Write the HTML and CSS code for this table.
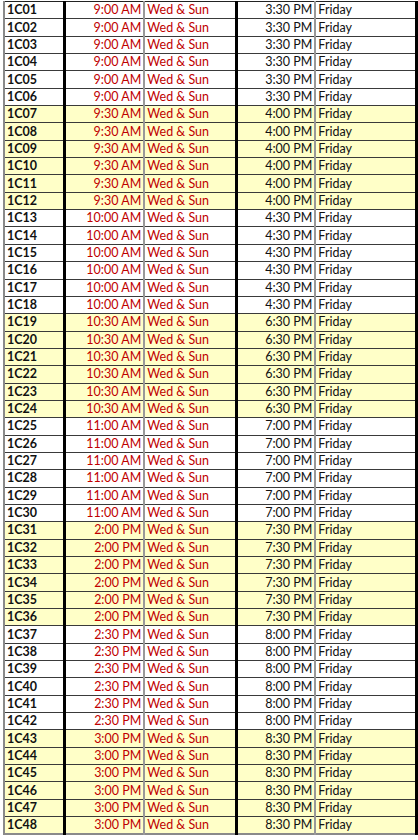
FILE: index.html
```html
<!DOCTYPE html>
<html>
<head>
<meta charset="utf-8">
<link rel="stylesheet" href="styles.css">
</head>
<body>
<table class="sched">
<tbody id="rows"></tbody>
</table>
<script>
var am=["9:00 AM","9:30 AM","10:00 AM","10:30 AM","11:00 AM","2:00 PM","2:30 PM","3:00 PM"];
var pm=["3:30 PM","4:00 PM","4:30 PM","6:30 PM","7:00 PM","7:30 PM","8:00 PM","8:30 PM"];
var tb=document.getElementById("rows");
for(var i=0;i<48;i++){
  var g=Math.floor(i/6);
  var n=i+1; var id="1C"+(n<10?"0"+n:n);
  var tr=document.createElement("tr");
  tr.className=(g%2)?"hl":"";
  tr.innerHTML='<td class="c1">'+id+'</td><td class="c2">'+am[g]+'</td><td class="c3">Wed &amp; Sun</td><td class="c4">'+pm[g]+'</td><td class="c5">Friday</td>';
  tb.appendChild(tr);
}
</script>
</body>
</html>
```
FILE: styles.css
```css
html, body { margin: 0; padding: 0; background: #fff; }
.sched {
  margin: 1px 0 0 3px;
  border-collapse: collapse;
  table-layout: fixed;
  font-family: Lato, "Open Sans", sans-serif;
  font-size: 12.5px;
  color: #111;
  border-left: 2px solid #8a8a8a;
  border-bottom: 2px solid #8a8a8a;
  border-top: 1px solid #222;
}
.sched tr { height: 17.35px; }
.sched td {
  padding: 0 2px;
  line-height: 14px;
  border-bottom: 1px solid #3a3a3a;
  white-space: nowrap;
  overflow: hidden;
}
.sched tr.hl td { background: #ffffc8; }
.c1 { width: 55px; font-weight: bold; border-right: 3px solid #000; }
.c2 { width: 74px; text-align: right; color: #c00000; border-right: 2px solid #999; }
.c3 { width: 87px; color: #c00000; border-right: 3px solid #000; }
.c4 { width: 73px; text-align: right; border-right: 2px solid #999; }
.c5 { width: 97px; border-right: 3px solid #000; }
```
